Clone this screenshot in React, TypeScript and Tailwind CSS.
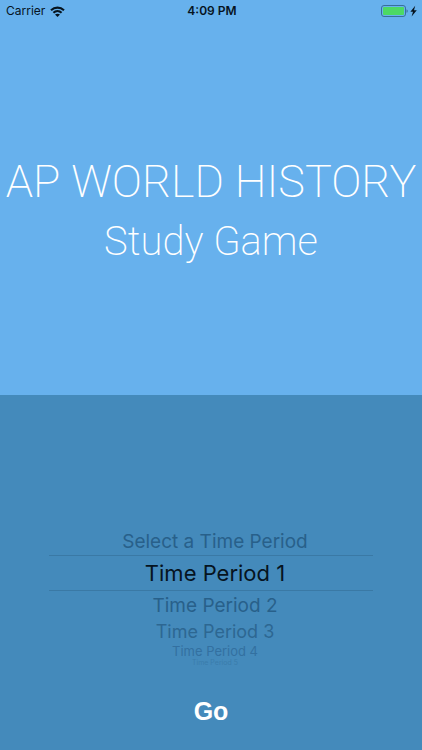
import React, { useState } from 'react';
import clsx from 'clsx';

const periods = [
  'Select a Time Period',
  'Time Period 1',
  'Time Period 2',
  'Time Period 3',
  'Time Period 4',
  'Time Period 5',
  'Time Period 6',
];

// row styles by distance from the selected row
const rowStyles = [
  'h-9 border-y border-[#3a79a5] text-[22px] text-[#06141f]',
  'h-7 text-[19px] text-[#28608a]',
  'h-[26px] text-[18px] text-[#2d6792]',
  'h-[13px] text-[13px] text-[#3370a0]',
  'h-2 text-[7px] text-[#3a7cab]',
];

const StatusBar = () => (
  <header className="grid h-[22px] grid-cols-3 items-center pr-1 pl-[6px] text-[12px] text-[#06141f]">
    <div className="flex items-center gap-[5px]">
      <span>Carrier</span>
      <svg className="h-[11px] w-[15px]" viewBox="0 0 15 11" fill="none" stroke="currentColor" strokeWidth="2.1" aria-hidden="true">
        <path d="M1 4.2C4.7 0.8 10.3 0.8 14 4.2" />
        <path d="M3.4 6.8C5.8 4.6 9.2 4.6 11.6 6.8" />
        <path d="M5 8.6C6.5 7.4 8.5 7.4 10 8.6L7.5 11Z" fill="currentColor" stroke="none" />
      </svg>
    </div>
    <span className="text-center font-semibold">4:09 PM</span>
    <svg className="h-3 w-[37px] justify-self-end" viewBox="0 0 37 12" aria-hidden="true">
      <rect x="0.5" y="0.5" width="24" height="11" rx="2.5" fill="none" stroke="#38709a" />
      <rect x="2" y="2" width="21" height="8" rx="1" fill="#4cd964" />
      <path d="M25.5 4.2C27.2 4.6 27.2 7.4 25.5 7.8Z" fill="#38709a" />
      <path d="M34.2 0.8L29.4 6.8H32L30.6 11.4L35.8 5.2H33Z" fill="#06141f" />
    </svg>
  </header>
);

const PeriodPicker = () => {
  const [selected, setSelected] = useState(1);

  return (
    <div role="listbox" aria-label="Time period" className="flex min-h-[140px] w-[77%] flex-col">
      {periods.map((name, i) => {
        const distance = Math.abs(i - selected);
        if (distance >= rowStyles.length) return null;
        return (
          <button
            key={name}
            type="button"
            role="option"
            aria-selected={i === selected}
            onClick={() => setSelected(i)}
            className={clsx(
              'flex w-full items-center justify-center pl-2 whitespace-nowrap leading-none',
              rowStyles[distance]
            )}
          >
            {name}
          </button>
        );
      })}
    </div>
  );
};

export default function App() {
  return (
    <div className="flex min-h-screen flex-col bg-[#448abb] font-['Inter','Liberation_Sans',sans-serif]">
      <section className="flex min-h-[395px] flex-col bg-[#67b1ed]">
        <StatusBar />
        <h1 className="mt-[132px] text-center font-['Roboto','Liberation_Sans',sans-serif] font-extralight text-white">
          <span className="block whitespace-nowrap text-[45px] leading-[56px]">AP WORLD HISTORY</span>
          <span className="mt-1 block text-[40px] leading-[56px]">Study Game</span>
        </h1>
      </section>
      <main className="flex flex-1 flex-col items-center justify-end pb-[19px]">
        <PeriodPicker />
        <button type="button" className="mt-6 px-4 font-['Liberation_Sans',sans-serif] text-[25px] leading-[40px] font-bold text-white">
          Go
        </button>
      </main>
    </div>
  );
}
